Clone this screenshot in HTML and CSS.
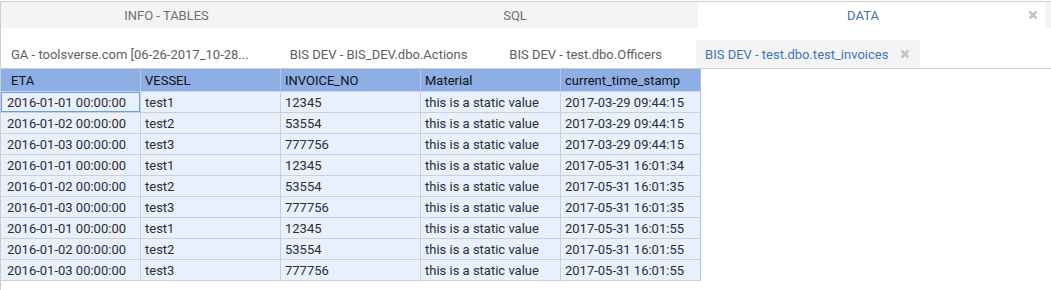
FILE: index.html
```html
<!DOCTYPE html>
<html>
<head>
<meta charset="utf-8">
<link rel="stylesheet" href="styles.css">
</head>
<body>
<div class="app">
  <div class="maintabs">
    <div class="maintab">INFO - TABLES</div>
    <div class="maintab">SQL</div>
    <div class="maintab active">DATA
      <svg class="xicon main-x" viewBox="0 0 10 10" width="10" height="10"><path d="M1.5 1.5L8.5 8.5M8.5 1.5L1.5 8.5" stroke="#c4c4c4" stroke-width="2.6" stroke-linecap="butt"/></svg>
    </div>
    <div class="maintab-filler"></div>
  </div>
  <div class="subtabs">
    <div class="subtab">GA - toolsverse.com [06-26-2017_10-28...</div>
    <div class="subtab">BIS DEV - BIS_DEV.dbo.Actions</div>
    <div class="subtab">BIS DEV - test.dbo.Officers</div>
    <div class="subtab active">BIS DEV - test.dbo.test_invoices
      <svg class="xicon" viewBox="0 0 10 10" width="10" height="10"><path d="M1.5 1.5L8.5 8.5M8.5 1.5L1.5 8.5" stroke="#c4c4c4" stroke-width="2.6" stroke-linecap="butt"/></svg>
    </div>
  </div>
  <div class="grid">
    <table class="data">
      <thead>
        <tr><th class="first">ETA</th><th>VESSEL</th><th>INVOICE_NO</th><th>Material</th><th>current_time_stamp</th></tr>
      </thead>
      <tbody>
        <tr><td class="focus">2016-01-01 00:00:00</td><td>test1</td><td>12345</td><td>this is a static value</td><td>2017-03-29 09:44:15</td></tr>
        <tr><td>2016-01-02 00:00:00</td><td>test2</td><td>53554</td><td>this is a static value</td><td>2017-03-29 09:44:15</td></tr>
        <tr><td>2016-01-03 00:00:00</td><td>test3</td><td>777756</td><td>this is a static value</td><td>2017-03-29 09:44:15</td></tr>
        <tr><td>2016-01-01 00:00:00</td><td>test1</td><td>12345</td><td>this is a static value</td><td>2017-05-31 16:01:34</td></tr>
        <tr><td>2016-01-02 00:00:00</td><td>test2</td><td>53554</td><td>this is a static value</td><td>2017-05-31 16:01:35</td></tr>
        <tr><td>2016-01-03 00:00:00</td><td>test3</td><td>777756</td><td>this is a static value</td><td>2017-05-31 16:01:35</td></tr>
        <tr><td>2016-01-01 00:00:00</td><td>test1</td><td>12345</td><td>this is a static value</td><td>2017-05-31 16:01:55</td></tr>
        <tr><td>2016-01-02 00:00:00</td><td>test2</td><td>53554</td><td>this is a static value</td><td>2017-05-31 16:01:55</td></tr>
        <tr><td>2016-01-03 00:00:00</td><td>test3</td><td>777756</td><td>this is a static value</td><td>2017-05-31 16:01:55</td></tr>
      </tbody>
    </table>
  </div>
</div>
</body>
</html>
```
FILE: styles.css
```css
html, body {
  margin: 0;
  padding: 0;
  background: #ffffff;
}
body {
  font-family: Roboto, "Liberation Sans", sans-serif;
  font-size: 13px;
  color: #333;
}
.app {
  margin-top: 1px;
  border-top: 1px solid #cccccc;
  border-left: 1px solid #cccccc;
  height: 288px;
  overflow: hidden;
}
.maintabs {
  display: flex;
  height: 26px;
  background: #f4f4f4;
}
.maintab {
  width: 348px;
  box-sizing: border-box;
  padding-right: 17px;
  flex: none;
  display: flex;
  align-items: center;
  justify-content: center;
  color: #707070;
  position: relative;
}
.maintab:nth-child(2) {
  width: 349px;
}
.maintab.active {
  width: 347px;
  background: #ffffff;
  color: #4a72ad;
}
.maintab-filler {
  flex: 1;
  background: #f4f4f4;
}
.main-x {
  position: absolute;
  right: 7px;
  top: 8px;
}
.subtabs {
  display: flex;
  margin-top: 12px;
  height: 28px;
  gap: 22px;
}
.subtab {
  display: flex;
  align-items: center;
  padding: 0 10px;
  color: #5e5e5e;
  white-space: nowrap;
}
.subtab:first-child {
  padding-right: 9px;
}
.subtab.active {
  margin-left: 2px;
  background: #f4f4f4;
  color: #3f74b8;
  padding: 0 10px 0 9px;
}
.subtab .xicon {
  margin-left: 12px;
}
.grid {
  border-top: 1px solid #cccccc;
  height: 230px;
}
.data {
  border-collapse: collapse;
  table-layout: fixed;
  width: 700px;
  margin-left: -1px;
}
.data th, .data td {
  width: 140px;
  box-sizing: border-box;
  padding: 0 4px;
  text-align: left;
  white-space: nowrap;
  overflow: hidden;
  font-weight: normal;
}
.data th {
  height: 22px;
  padding-top: 1px;
  background: #8eaee6;
  color: #111111;
  border-left: 1px solid #b4c6e8;
  border-bottom: 1px solid #c8d4ec;
}
.data th.first {
  padding-left: 10px;
}
.data td {
  height: 21px;
  padding-top: 1px;
  background: #e8f0fe;
  color: #2e2e2e;
  border: 1px solid #cfcfcf;
}
.data tr td:last-child, .data tr th:last-child {
  border-right: 1px solid #a9bde6;
}
.data td.focus {
  box-shadow: inset 0 0 0 1px #6a9ee6;
}
.data td:first-child {
  padding-left: 6px;
}
```
